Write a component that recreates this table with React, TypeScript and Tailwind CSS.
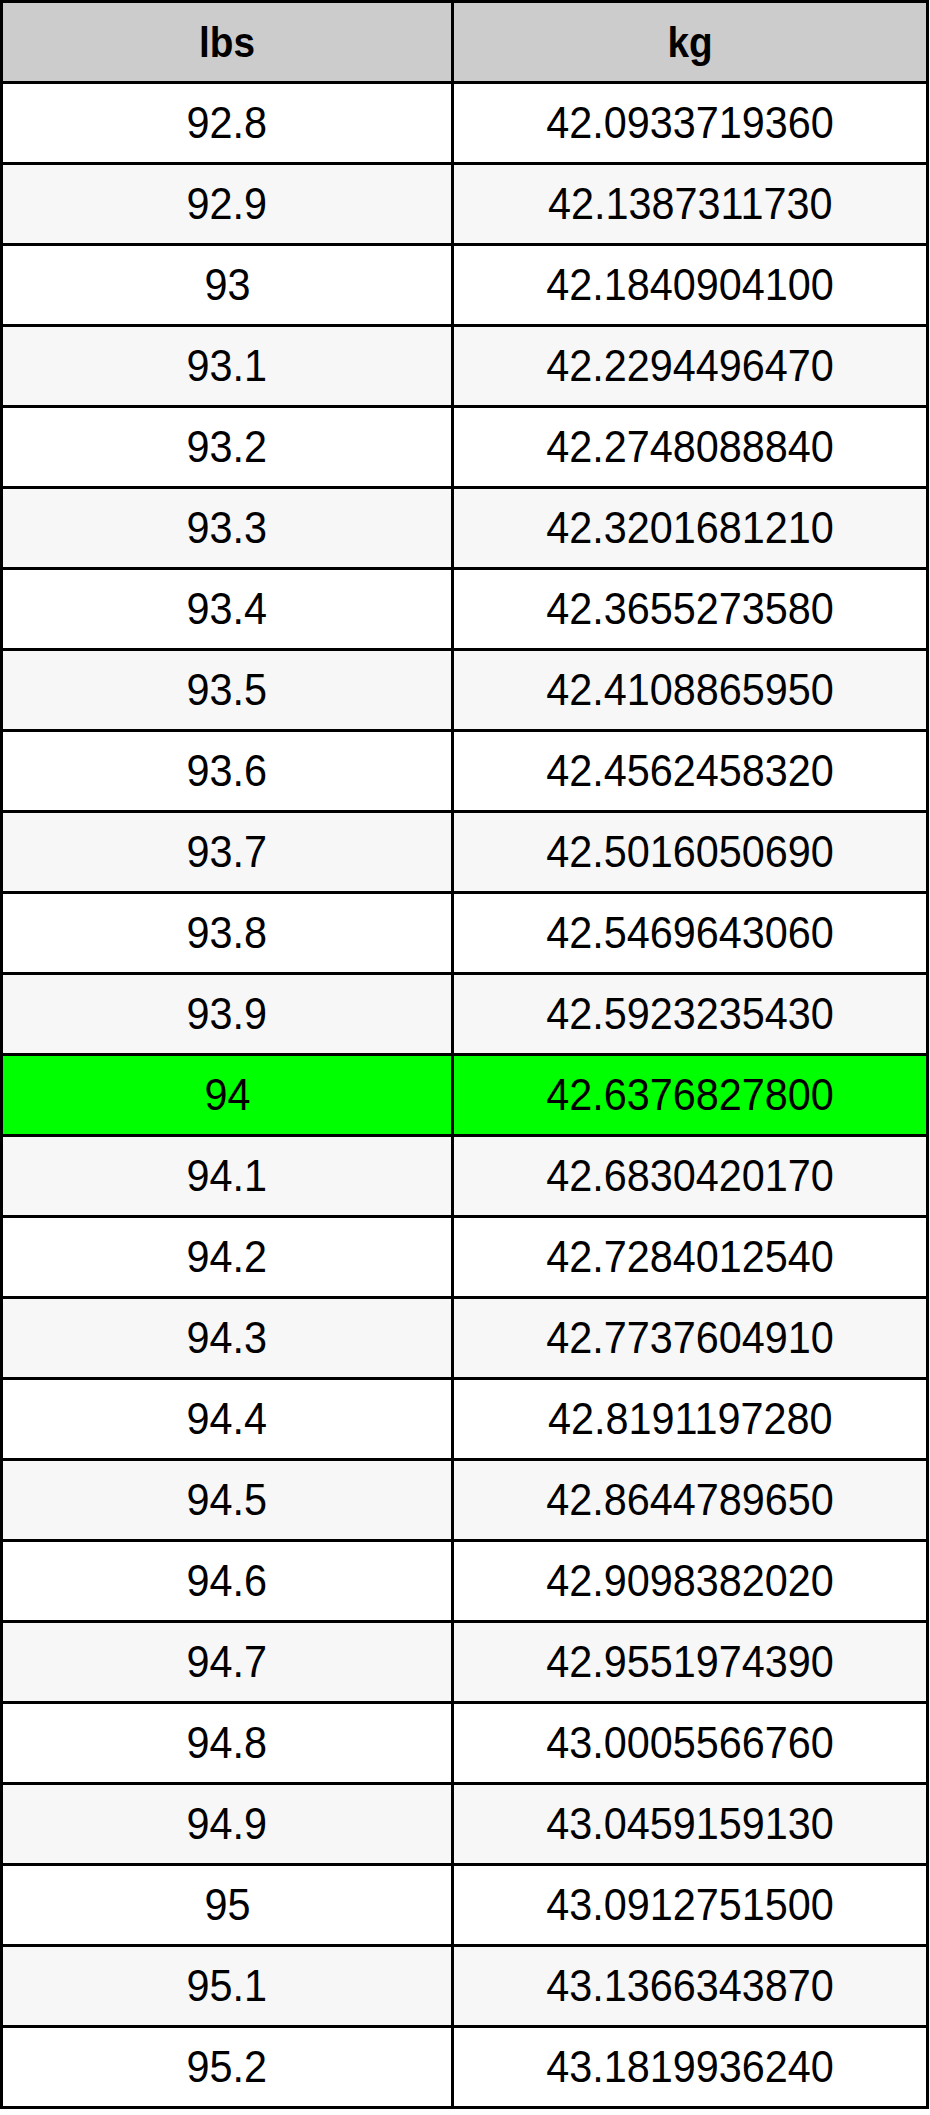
const rows: [string, string][] = [
  ["92.8", "42.0933719360"],
  ["92.9", "42.1387311730"],
  ["93", "42.1840904100"],
  ["93.1", "42.2294496470"],
  ["93.2", "42.2748088840"],
  ["93.3", "42.3201681210"],
  ["93.4", "42.3655273580"],
  ["93.5", "42.4108865950"],
  ["93.6", "42.4562458320"],
  ["93.7", "42.5016050690"],
  ["93.8", "42.5469643060"],
  ["93.9", "42.5923235430"],
  ["94", "42.6376827800"],
  ["94.1", "42.6830420170"],
  ["94.2", "42.7284012540"],
  ["94.3", "42.7737604910"],
  ["94.4", "42.8191197280"],
  ["94.5", "42.8644789650"],
  ["94.6", "42.9098382020"],
  ["94.7", "42.9551974390"],
  ["94.8", "43.0005566760"],
  ["94.9", "43.0459159130"],
  ["95", "43.0912751500"],
  ["95.1", "43.1366343870"],
  ["95.2", "43.1819936240"],
];

export default function App() {
  return (
    <div className="w-[930px] min-h-[2115px] bg-white font-['Liberation_Sans',Arial,sans-serif] text-black">
      <div className="w-[929px] border-[3px] border-black">
        {/* header */}
        <div className="flex h-[81px] border-b-[3px] border-black bg-[#cccccc] text-[43px] font-bold">
          <div className="w-[451px] border-r-[3px] border-black flex items-center justify-center">
            <span className="inline-block scale-x-[0.9]">lbs</span>
          </div>
          <div className="flex-1 flex items-center justify-center">
            <span className="inline-block scale-x-[0.9]">kg</span>
          </div>
        </div>

        {rows.map(([lbs, kg], i) => {
          const last = i === rows.length - 1;
          const bg =
            lbs === "94" ? "bg-[#00ff00]" : i % 2 === 1 ? "bg-[#f7f7f7]" : "bg-white";
          return (
            <div
              key={lbs}
              className={`flex text-[44px] ${bg} ${
                last ? "h-[78px]" : "h-[81px] border-b-[3px] border-black"
              }`}
            >
              <div className="w-[451px] border-r-[3px] border-black flex items-center justify-center">
                <span className="inline-block scale-x-[0.94]">{lbs}</span>
              </div>
              <div className="flex-1 flex items-center justify-center">
                <span className="inline-block scale-x-[0.94]">{kg}</span>
              </div>
            </div>
          );
        })}
      </div>
    </div>
  );
}
